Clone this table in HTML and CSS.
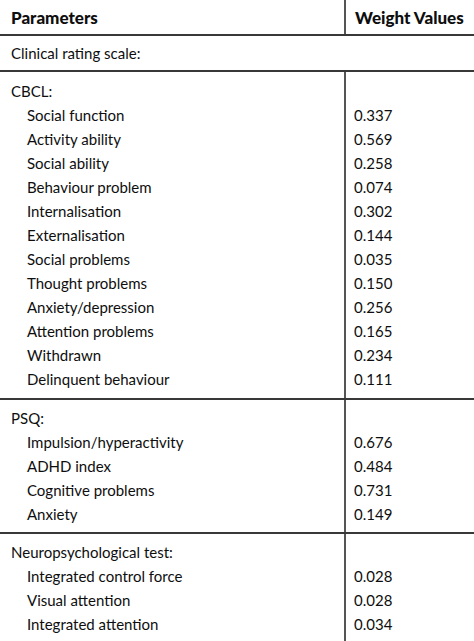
FILE: index.html
```html
<!DOCTYPE html>
<html>
<head>
<meta charset="utf-8">
<link rel="stylesheet" href="styles.css">
</head>
<body>
<div class="table">
  <div class="head">
    <div class="name-cell">Parameters</div>
    <div class="value-cell">Weight Values</div>
  </div>
  <div class="full-row">Clinical rating scale:</div>
  <div class="section sec-cbcl">
    <div class="names">
      <div class="row group">CBCL:</div>
      <div class="row item">Social function</div>
      <div class="row item">Activity ability</div>
      <div class="row item">Social ability</div>
      <div class="row item">Behaviour problem</div>
      <div class="row item">Internalisation</div>
      <div class="row item">Externalisation</div>
      <div class="row item">Social problems</div>
      <div class="row item">Thought problems</div>
      <div class="row item">Anxiety/depression</div>
      <div class="row item">Attention problems</div>
      <div class="row item">Withdrawn</div>
      <div class="row item">Delinquent behaviour</div>
    </div>
    <div class="values">
      <div class="row"></div>
      <div class="row">0.337</div>
      <div class="row">0.569</div>
      <div class="row">0.258</div>
      <div class="row">0.074</div>
      <div class="row">0.302</div>
      <div class="row">0.144</div>
      <div class="row">0.035</div>
      <div class="row">0.150</div>
      <div class="row">0.256</div>
      <div class="row">0.165</div>
      <div class="row">0.234</div>
      <div class="row">0.111</div>
    </div>
  </div>
  <div class="section sec-psq">
    <div class="names">
      <div class="row group">PSQ:</div>
      <div class="row item">Impulsion/hyperactivity</div>
      <div class="row item">ADHD index</div>
      <div class="row item">Cognitive problems</div>
      <div class="row item">Anxiety</div>
    </div>
    <div class="values">
      <div class="row"></div>
      <div class="row">0.676</div>
      <div class="row">0.484</div>
      <div class="row">0.731</div>
      <div class="row">0.149</div>
    </div>
  </div>
  <div class="section sec-neuro">
    <div class="names">
      <div class="row group">Neuropsychological test:</div>
      <div class="row item">Integrated control force</div>
      <div class="row item">Visual attention</div>
      <div class="row item">Integrated attention</div>
    </div>
    <div class="values">
      <div class="row"></div>
      <div class="row">0.028</div>
      <div class="row">0.028</div>
      <div class="row">0.034</div>
    </div>
  </div>
</div>
</body>
</html>
```
FILE: styles.css
```css
html, body {
  margin: 0;
  padding: 0;
  background: #ffffff;
}
body {
  font-family: "Lato", "Liberation Sans", sans-serif;
  font-size: 15px;
  color: #0e0e0e;
  overflow: hidden;
}
.table {
  width: 474px;
}
.head {
  display: flex;
  height: 34px;
  border-bottom: 2px solid #383838;
  font-weight: 900;
  font-size: 17px;
}
.name-cell {
  width: 344px;
  padding-left: 11px;
  box-sizing: border-box;
  display: flex;
  align-items: center;
}
.value-cell {
  flex: 1;
  border-left: 2px solid #555555;
  padding-left: 9px;
  display: flex;
  align-items: center;
}
.full-row {
  height: 34px;
  border-bottom: 2px solid #383838;
  padding-left: 11px;
  display: flex;
  align-items: center;
}
.section {
  display: flex;
  border-bottom: 2px solid #383838;
}
.names {
  width: 344px;
  padding: 7px 0;
}
.values {
  flex: 1;
  border-left: 2px solid #555555;
  padding: 7px 0 7px 8px;
}
.sec-psq .names, .sec-psq .values,
.sec-neuro .names, .sec-neuro .values {
  padding-top: 6px;
  padding-bottom: 6px;
}
.sec-neuro {
  border-bottom: none;
}
.row {
  height: 24px;
  display: flex;
  align-items: center;
}
.group {
  padding-left: 11px;
}
.item {
  padding-left: 27px;
}
```
